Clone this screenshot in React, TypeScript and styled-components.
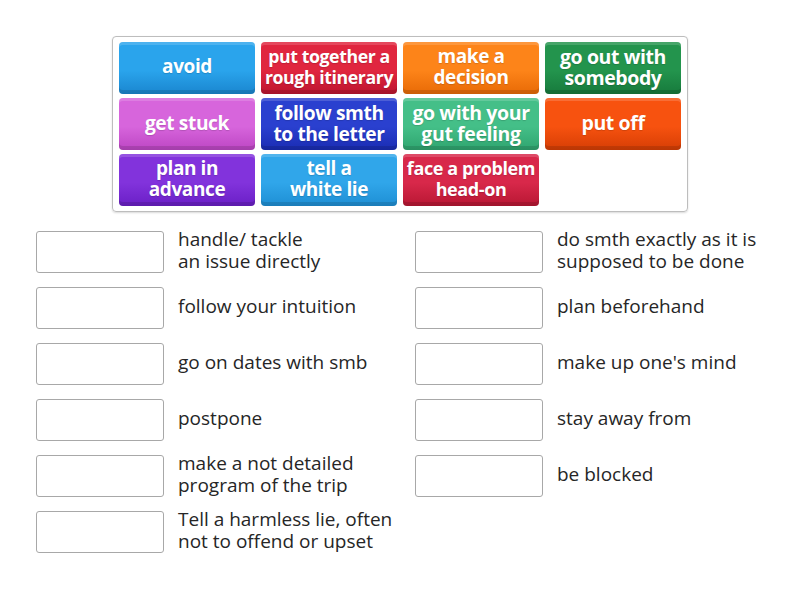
import React from 'react';
import styled, {createGlobalStyle} from "styled-components";

const GlobalStyle = createGlobalStyle`
  html, body {
    margin: 0;
    padding: 0;
    background: #ffffff;
    font-family: "Open Sans", "Noto Sans", sans-serif;
  }
`

type Tile = { text: string[]; color: string; dark: string; size?: number };

const tiles: Tile[] = [
    {text: ["avoid"], color: "#2aa4ec", dark: "#1a86cf", size: 19},
    {text: ["put together a", "rough itinerary"], color: "#e0263f", dark: "#bd1530", size: 17.7},
    {text: ["make a", "decision"], color: "#fd8419", dark: "#e86a06", size: 19},
    {text: ["go out with", "somebody"], color: "#23944d", dark: "#177a3c"},
    {text: ["get stuck"], color: "#d765dc", dark: "#bd46c4", size: 19.2},
    {text: ["follow smth", "to the letter"], color: "#2a40cf", dark: "#1a2cb3", size: 19.2},
    {text: ["go with your", "gut feeling"], color: "#44bf88", dark: "#2fa56f"},
    {text: ["put off"], color: "#f7520f", dark: "#d63e05"},
    {text: ["plan in", "advance"], color: "#8233dc", dark: "#6a1fc6", size: 19},
    {text: ["tell a", "white lie"], color: "#30a6ea", dark: "#1e8fd4", size: 19},
    {text: ["face a problem", "head-on"], color: "#d8284a", dark: "#b81733", size: 18},
];

type Pair = { text: string[] };

const leftItems: Pair[] = [
    {text: ["handle/ tackle", "an issue directly"]},
    {text: ["follow your intuition"]},
    {text: ["go on dates with smb"]},
    {text: ["postpone"]},
    {text: ["make a not detailed", "program of the trip"]},
    {text: ["Tell a harmless lie, often", "not to offend or upset"]},
];

const rightItems: Pair[] = [
    {text: ["do smth exactly as it is", "supposed to be done"]},
    {text: ["plan beforehand"]},
    {text: ["make up one's mind"]},
    {text: ["stay away from"]},
    {text: ["be blocked"]},
];

// lines split by <br/> so each label stays one text block
const Lines = ({lines}: {lines: string[]}) => (
    <>
        {lines.map((line, j) => (
            <React.Fragment key={j}>
                {j > 0 && <br/>}
                {line}
            </React.Fragment>
        ))}
    </>
);

const MatchColumn = ({items}: {items: Pair[]}) => (
    <Column>
        {items.map((item, i) => (
            <Row key={i}>
                <Slot/>
                <Definition>
                    <Lines lines={item.text}/>
                </Definition>
            </Row>
        ))}
    </Column>
);

const App = () => {
    return (
        <>
            <GlobalStyle/>
            <Page>
                <Bank>
                    {tiles.map((t, i) => (
                        <Card key={i} color={t.color} dark={t.dark} size={t.size ?? 19.5}>
                            <CardText>
                                <Lines lines={t.text}/>
                            </CardText>
                        </Card>
                    ))}
                </Bank>
                <Targets>
                    <MatchColumn items={leftItems}/>
                    <MatchColumn items={rightItems}/>
                </Targets>
            </Page>
        </>
    );
};

const Page = styled.div`
  width: 800px;
  height: 600px;
  padding-top: 36px;
  box-sizing: border-box;
  display: flex;
  flex-direction: column;
  align-items: center;
`

const Bank = styled.div`
  width: 576px;
  box-sizing: border-box;
  border: 1px solid #bdbdbd;
  border-radius: 4px;
  padding: 5px 6px;
  display: grid;
  grid-template-columns: repeat(4, 136px);
  grid-auto-rows: 52px;
  column-gap: 6px;
  row-gap: 4px;
  box-shadow: 0 1px 2px rgba(0, 0, 0, 0.15);
`

const Card = styled.div<{color: string; dark: string; size: number}>`
  display: flex;
  align-items: center;
  justify-content: center;
  border-radius: 4px;
  background: linear-gradient(to bottom, ${(p) => p.color} 0%, ${(p) => p.color} 55%, ${(p) => p.dark} 100%);
  box-shadow: inset 0 -4px 0 rgba(0, 0, 0, 0.12), inset 0 3px 0 rgba(255, 255, 255, 0.16);
  color: #ffffff;
  font-weight: 700;
  font-size: ${(p) => p.size}px;
  line-height: 21px;
  letter-spacing: -0.4px;
  padding-bottom: 3px;
  box-sizing: border-box;
  text-shadow: 0 1px 1px rgba(0, 0, 0, 0.15);
`

const CardText = styled.div`
  text-align: center;
  white-space: nowrap;
`

const Targets = styled.div`
  margin-top: 19px;
  width: 800px;
  padding-left: 36px;
  box-sizing: border-box;
  display: grid;
  grid-template-columns: 379px 1fr;
`

const Column = styled.div`
  display: flex;
  flex-direction: column;
  gap: 14px;
`

const Row = styled.div`
  display: flex;
  align-items: center;
  gap: 14px;
  height: 42px;
`

const Slot = styled.div`
  width: 128px;
  height: 42px;
  box-sizing: border-box;
  border: 1px solid #a8a8a8;
  border-radius: 3px;
  background: #ffffff;
  flex-shrink: 0;
`

const Definition = styled.div`
  font-size: 19px;
  line-height: 22px;
  color: #262626;
  margin-top: -4px;
  white-space: nowrap;
`

export default App;
